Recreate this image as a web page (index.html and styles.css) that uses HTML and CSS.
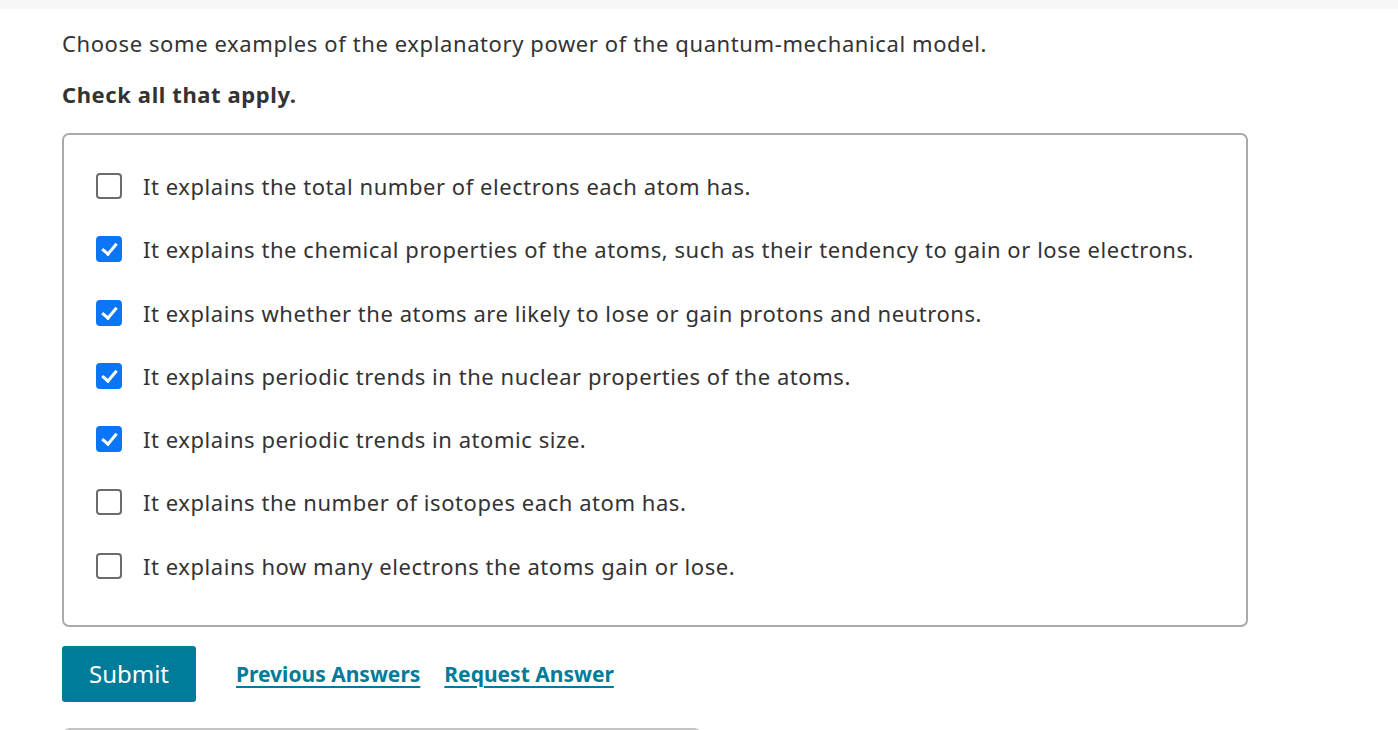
FILE: index.html
```html
<!DOCTYPE html>
<html lang="en">
<head>
    <meta charset="UTF-8">
    <meta name="viewport" content="width=device-width, initial-scale=1.0">
    <title>Quantum-Mechanical Model</title>
    <link rel="stylesheet" href="styles.css">
</head>
<body>
    <div class="topbar"></div>

    <div class="part">
        <p class="prompt">Choose some examples of the explanatory power of the quantum-mechanical model.</p>
        <p class="instruction">Check all that apply.</p>

        <div class="choices">
            <label class="choice">
                <input type="checkbox">
                <span class="box"></span>
                <span>It explains the total number of electrons each atom has.</span>
            </label>
            <label class="choice">
                <input type="checkbox" checked>
                <span class="box"></span>
                <span>It explains the chemical properties of the atoms, such as their tendency to gain or lose electrons.</span>
            </label>
            <label class="choice">
                <input type="checkbox" checked>
                <span class="box"></span>
                <span>It explains whether the atoms are likely to lose or gain protons and neutrons.</span>
            </label>
            <label class="choice">
                <input type="checkbox" checked>
                <span class="box"></span>
                <span>It explains periodic trends in the nuclear properties of the atoms.</span>
            </label>
            <label class="choice">
                <input type="checkbox" checked>
                <span class="box"></span>
                <span>It explains periodic trends in atomic size.</span>
            </label>
            <label class="choice">
                <input type="checkbox">
                <span class="box"></span>
                <span>It explains the number of isotopes each atom has.</span>
            </label>
            <label class="choice">
                <input type="checkbox">
                <span class="box"></span>
                <span>It explains how many electrons the atoms gain or lose.</span>
            </label>
        </div>

        <div class="actions">
            <button class="submit">Submit</button>
            <a href="#" class="link">Previous Answers</a>
            <a href="#" class="link">Request Answer</a>
        </div>

        <div class="feedback"></div>
    </div>
</body>
</html>
```

FILE: styles.css
```css
body {
    margin: 0;
    padding: 0;
    font-family: "Noto Sans", "Open Sans", Arial, sans-serif;
    color: #333333;
    background: #ffffff;
    overflow: hidden;
}

.topbar {
    height: 9px;
    background: #f7f7f7;
}

.part {
    padding-left: 62px;
    width: 1186px;
}

.prompt {
    margin: 0;
    padding-top: 20px;
    font-size: 22px;
    line-height: 28px;
    letter-spacing: 0.6px;
}

.instruction {
    margin: 23px 0 0;
    font-size: 22px;
    line-height: 28px;
    font-weight: bold;
    letter-spacing: 0.6px;
}

/* Answer list */
.choices {
    margin-top: 25px;
    border: 2px solid #aaaaaa;
    border-radius: 7px;
    padding: 38px 32px 46px;
    display: flex;
    flex-direction: column;
    gap: 37.3px;
}

.choice {
    display: flex;
    align-items: center;
    gap: 21px;
    font-size: 22px;
    line-height: 26px;
    letter-spacing: 0.55px;
    cursor: pointer;
}

.choice input {
    display: none;
}

.box {
    flex: none;
    width: 22px;
    height: 22px;
    border: 2px solid #6b6b6b;
    border-radius: 4px;
    position: relative;
}

.choice input:checked + .box {
    background: #0a76f6;
    border-color: #0a76f6;
}

.choice input:checked + .box::after {
    content: "";
    position: absolute;
    left: 7px;
    top: 2px;
    width: 6px;
    height: 12px;
    border: solid #ffffff;
    border-width: 0 3.5px 3.5px 0;
    transform: rotate(40deg);
}

/* Buttons and links under the list */
.actions {
    margin-top: 19px;
    display: flex;
    align-items: center;
    gap: 24px;
}

.submit {
    width: 134px;
    height: 56px;
    background: #007c9a;
    color: #ffffff;
    border: none;
    border-radius: 3px;
    font-family: inherit;
    font-size: 24px;
    cursor: pointer;
    margin-right: 16px;
}

.link {
    color: #007c9a;
    font-size: 21px;
    font-weight: bold;
    text-decoration: underline;
    text-decoration-thickness: 2px;
    text-underline-offset: 4px;
}

.feedback {
    margin-top: 26px;
    width: 636px;
    height: 20px;
    border: 2px solid #c4c4c4;
    border-radius: 8px;
}
```
